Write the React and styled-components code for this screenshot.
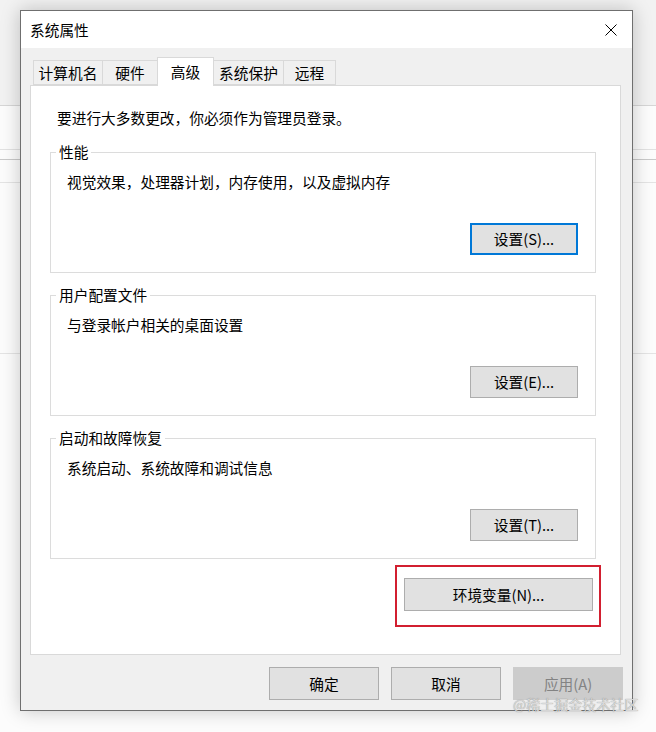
import styled, { createGlobalStyle } from "styled-components";

const GlobalStyle = createGlobalStyle`
  html, body {
    margin: 0;
    padding: 0;
  }
  body {
    font-family: "Noto Sans CJK SC", "Microsoft YaHei", sans-serif;
    color: #000;
    background: linear-gradient(
      to bottom,
      #f2f2f2 0 105px,
      #d6d6d6 105px 106px,
      #fcfcfc 106px 149px,
      #e2e2e2 149px 150px,
      #fcfcfc 150px 159px,
      #c9c9c9 159px 160px,
      #fcfcfc 160px 182px,
      #e4e4e4 182px 183px,
      #fcfcfc 183px 353px,
      #e4e4e4 353px 354px,
      #fcfcfc 354px
    );
  }
`;

const FONT = "14.7px";

const Page = styled.div`
  position: relative;
  height: 732px;
  box-sizing: border-box;
  padding: 10px 0 0 20px;
  overflow: hidden;
`;

const Window = styled.div`
  width: 613px;
  height: 701px;
  box-sizing: border-box;
  border: 1px solid #6f6f6f;
  background: #f0f0f0;
  box-shadow: 0 0 18px rgba(0, 0, 0, 0.22);
  display: flex;
  flex-direction: column;
`;

const TitleBar = styled.div`
  height: 37px;
  background: #fff;
  display: flex;
  align-items: center;
  padding-left: 9px;
  font-size: ${FONT};
  line-height: 20px;
`;

const CloseButton = styled.div`
  margin-left: auto;
  width: 42px;
  height: 37px;
  display: flex;
  align-items: center;
  justify-content: center;
`;

const Body = styled.div`
  flex: 1;
  padding: 9px 11px 0 9px;
  display: flex;
  flex-direction: column;
`;

const TabRow = styled.div`
  position: relative;
  z-index: 2;
  display: flex;
  align-items: flex-end;
  height: 28px;
  padding-left: 3px;
`;

const Tab = styled.div`
  box-sizing: border-box;
  width: ${(p) => p.$w}px;
  height: ${(p) => (p.$active ? 29 : 25)}px;
  margin-bottom: ${(p) => (p.$active ? -1 : 0)}px;
  margin-left: ${(p) => (p.$first ? 0 : -1)}px;
  border: 1px solid #d9d9d9;
  border-bottom: ${(p) => (p.$active ? "none" : "1px solid #d9d9d9")};
  background: ${(p) => (p.$active ? "#fff" : "#f0f0f0")};
  position: relative;
  z-index: ${(p) => (p.$active ? 2 : 1)};
  text-align: center;
  font-size: ${FONT};
  line-height: ${(p) => (p.$active ? 27 : 23)}px;
  white-space: nowrap;
`;

const Panel = styled.div`
  position: relative;
  z-index: 1;
  height: 570px;
  box-sizing: border-box;
  background: #fff;
  border: 1px solid #d9d9d9;
  padding: 22px 24px 0 19px;
  display: flex;
  flex-direction: column;
`;

const Intro = styled.div`
  margin: 0 0 14px 7px;
  font-size: ${FONT};
  line-height: 20px;
`;

const Group = styled.fieldset`
  margin: 0;
  min-width: 0;
  border: 1px solid #dcdcdc;
  padding: 10px 17px 17px 16px;
  display: flex;
  flex-direction: column;

  & + & {
    margin-top: 12px;
  }
`;

const Legend = styled.legend`
  padding: 0 3px;
  margin-left: -11px;
  font-size: ${FONT};
  line-height: 20px;
`;

const Desc = styled.div`
  font-size: ${FONT};
  line-height: 20px;
`;

const ButtonRow = styled.div`
  display: flex;
  justify-content: flex-end;
  margin-top: 31px;
`;

const Button = styled.button`
  box-sizing: border-box;
  width: ${(p) => p.$w || 108}px;
  height: ${(p) => p.$h || 32}px;
  padding: 0;
  margin: 0;
  background: ${(p) => (p.disabled ? "#cccccc" : "#e1e1e1")};
  border: ${(p) =>
    p.$focused
      ? "2px solid #0078d7"
      : p.disabled
      ? "1px solid #cccccc"
      : "1px solid #adadad"};
  color: ${(p) => (p.disabled ? "#838383" : "#000")};
  font-family: inherit;
  font-size: ${FONT};
  line-height: 20px;
  cursor: default;
`;

const EnvBox = styled.div`
  align-self: flex-end;
  margin: 6px -5px 0 0;
  border: 2px solid #d21f30;
  padding: 11px 6px 14px 7px;
  display: flex;
`;

const Footer = styled.div`
  display: flex;
  justify-content: flex-end;
  gap: 12px;
  margin: 12px -2px 0 0;
`;

const Watermark = styled.div`
  position: absolute;
  left: 513px;
  top: 694px;
  font-size: 14px;
  line-height: 20px;
  color: rgba(222, 222, 222, 0.95);
  text-shadow: 0 0 1px rgba(80, 80, 80, 0.7);
  white-space: nowrap;
  pointer-events: none;
`;

const tabs = [
  { label: "计算机名", w: 70 },
  { label: "硬件", w: 56 },
  { label: "高级", w: 57, active: true },
  { label: "系统保护", w: 71 },
  { label: "远程", w: 53 },
];

const groups = [
  {
    title: "性能",
    desc: "视觉效果，处理器计划，内存使用，以及虚拟内存",
    button: "设置(S)...",
    focused: true,
  },
  {
    title: "用户配置文件",
    desc: "与登录帐户相关的桌面设置",
    button: "设置(E)...",
  },
  {
    title: "启动和故障恢复",
    desc: "系统启动、系统故障和调试信息",
    button: "设置(T)...",
  },
];

const CloseIcon = () => (
  <svg width="12" height="12" viewBox="0 0 12 12">
    <path d="M0.5 0.5 L11.5 11.5 M11.5 0.5 L0.5 11.5" stroke="#000" strokeWidth="1" fill="none" />
  </svg>
);

const App = () => {
  return (
    <>
      <GlobalStyle />
      <Page>
        <Window>
          <TitleBar>
            系统属性
            <CloseButton>
              <CloseIcon />
            </CloseButton>
          </TitleBar>
          <Body>
            <TabRow>
              {tabs.map((t, i) => (
                <Tab key={t.label} $w={t.w} $active={t.active} $first={i === 0}>
                  {t.label}
                </Tab>
              ))}
            </TabRow>
            <Panel>
              <Intro>要进行大多数更改，你必须作为管理员登录。</Intro>
              {groups.map((g) => (
                <Group key={g.title}>
                  <Legend>{g.title}</Legend>
                  <Desc>{g.desc}</Desc>
                  <ButtonRow>
                    <Button $focused={g.focused}>{g.button}</Button>
                  </ButtonRow>
                </Group>
              ))}
              <EnvBox>
                <Button $w={189} $h={33}>
                  环境变量(N)...
                </Button>
              </EnvBox>
            </Panel>
            <Footer>
              <Button $w={110} $h={33}>确定</Button>
              <Button $w={110} $h={33}>取消</Button>
              <Button $w={110} $h={33} disabled>
                应用(A)
              </Button>
            </Footer>
          </Body>
        </Window>
        <Watermark>@稀土掘金技术社区</Watermark>
      </Page>
    </>
  );
};

export default App;
